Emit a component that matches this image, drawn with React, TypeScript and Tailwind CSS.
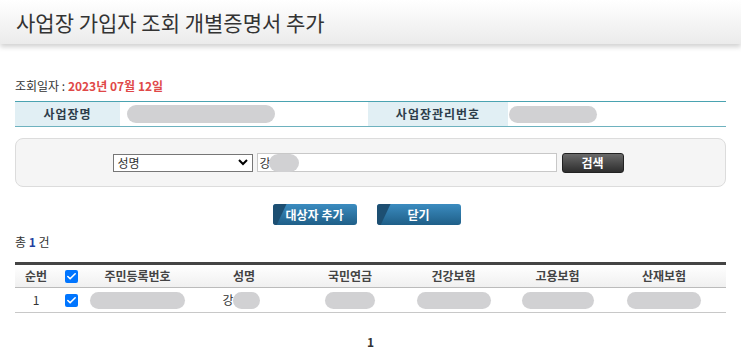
import { Check } from 'lucide-react';

const blob = 'rounded-full bg-[#d1d1d3]';

function Checkbox() {
  return (
    <span className="inline-flex h-[13px] w-[13px] items-center justify-center rounded-[2px] bg-[#0075ff]">
      <Check size={11} strokeWidth={3.5} className="text-white" />
    </span>
  );
}

function BlueButton({ label }: { label: string }) {
  return (
    <button className="relative h-[21px] w-[84px] overflow-hidden rounded-[3px] bg-gradient-to-b from-[#3b8cc0] to-[#1f5f88] text-[12px] font-bold text-white">
      <span className="absolute left-0 top-0 h-full w-[14px] bg-[#1d4f72] [clip-path:polygon(0_0,100%_0,30%_100%,0_100%)]" />
      <span className="relative">{label}</span>
    </button>
  );
}

export default function App() {
  const cols = ['순번', '', '주민등록번호', '성명', '국민연금', '건강보험', '고용보험', '산재보험'];

  return (
    <div className="h-[358px] w-[741px] overflow-hidden bg-white font-['Noto_Sans_CJK_KR','Noto_Sans',sans-serif] text-[#333]">
      {/* title bar */}
      <div className="flex h-[44px] items-center bg-gradient-to-b from-white to-[#ebebeb] pl-4 shadow-[0_3px_5px_rgba(0,0,0,0.18)]">
        <h1 className="text-[21px] leading-none text-[#333]">사업장 가입자 조회 개별증명서 추가</h1>
      </div>

      <div className="px-[15px]">
        <div className="mt-[33px] text-[12px] leading-[18px]">
          조회일자 : <span className="font-bold text-[#e04848]">2023년 07월 12일</span>
        </div>

        {/* info table */}
        <div className="mt-[6px] grid h-[26px] grid-cols-[105px_248px_140px_1fr] border-y border-t-[#4aa3b1] border-b-[#6eb2bf] text-[12px]">
          <div className="flex items-center justify-center bg-[#e1eff4] font-bold tracking-[1px] text-[#2d3d4a]">사업장명</div>
          <div className="flex items-center pl-[7px]">
            <span className={`${blob} h-[18px] w-[148px]`} />
          </div>
          <div className="flex items-center justify-center bg-[#e1eff4] font-bold tracking-[1px] text-[#2d3d4a]">사업장관리번호</div>
          <div className="flex items-center pl-[1px]">
            <span className={`${blob} h-[17px] w-[88px]`} />
          </div>
        </div>

        {/* search box */}
        <div className="mt-[11px] flex h-[49px] items-center justify-center gap-[4px] rounded-[8px] border border-[#dcdcdc] bg-[#f5f5f5] pr-[5px]">
          <div className="flex h-[18px] w-[140px] items-center justify-between border border-[#767676] bg-white px-[4px] text-[12px]">
            <span>성명</span>
            <svg width="10" height="7" viewBox="0 0 10 7"><path d="M1 1l4 4 4-4" fill="none" stroke="#000" strokeWidth="2" /></svg>
          </div>
          <div className="flex h-[19px] w-[300px] items-center border border-[#c8c8c8] bg-white pl-[2px] text-[12px]">
            <span>강</span>
            <span className={`${blob} -ml-[2px] h-[18px] w-[30px]`} />
          </div>
          <button className="ml-[1px] h-[20px] w-[62px] rounded-[3px] border border-[#222] bg-gradient-to-b from-[#6a6a6a] to-[#2e2e2e] text-[12px] font-bold text-white">
            검색
          </button>
        </div>

        {/* action buttons */}
        <div className="mt-[17px] flex justify-center gap-[20px] pr-[8px]">
          <BlueButton label="대상자 추가" />
          <BlueButton label="닫기" />
        </div>

        <div className="mt-[8px] text-[12px] leading-[18px]">
          총 <span className="font-bold text-[#1f3fa0]">1</span> 건
        </div>

        {/* result table */}
        <div className="mt-[11px] border-t-[3px] border-[#444]">
          <div className="grid h-[23px] grid-cols-[42px_28px_105px_108px_104px_103px_105px_108px] border-b border-[#bbb] bg-gradient-to-b from-white to-[#f0f0f0] text-[12px] font-bold text-[#444]">
            {cols.map((c, i) => (
              <div key={i} className="flex items-center justify-center">
                {i === 1 ? <Checkbox /> : c}
              </div>
            ))}
          </div>
          <div className="grid h-[25px] grid-cols-[42px_28px_105px_108px_104px_103px_105px_108px] border-b border-[#c8c8c8] text-[12px]">
            <div className="flex items-center justify-center">1</div>
            <div className="flex items-center justify-center"><Checkbox /></div>
            <div className="flex items-center justify-center">
              <span className={`${blob} h-[17px] w-[95px]`} />
            </div>
            <div className="flex items-center justify-center pr-[6px]">
              <span>강</span>
              <span className={`${blob} -ml-[1px] h-[17px] w-[27px]`} />
            </div>
            <div className="flex items-center justify-center">
              <span className={`${blob} h-[17px] w-[50px]`} />
            </div>
            <div className="flex items-center justify-center">
              <span className={`${blob} h-[17px] w-[74px]`} />
            </div>
            <div className="flex items-center justify-center">
              <span className={`${blob} h-[17px] w-[72px]`} />
            </div>
            <div className="flex items-center justify-center">
              <span className={`${blob} h-[17px] w-[74px]`} />
            </div>
          </div>
        </div>

        {/* pagination */}
        <div className="mt-[20px] flex justify-center text-[12px] font-bold text-[#333]">1</div>
      </div>
    </div>
  );
}
